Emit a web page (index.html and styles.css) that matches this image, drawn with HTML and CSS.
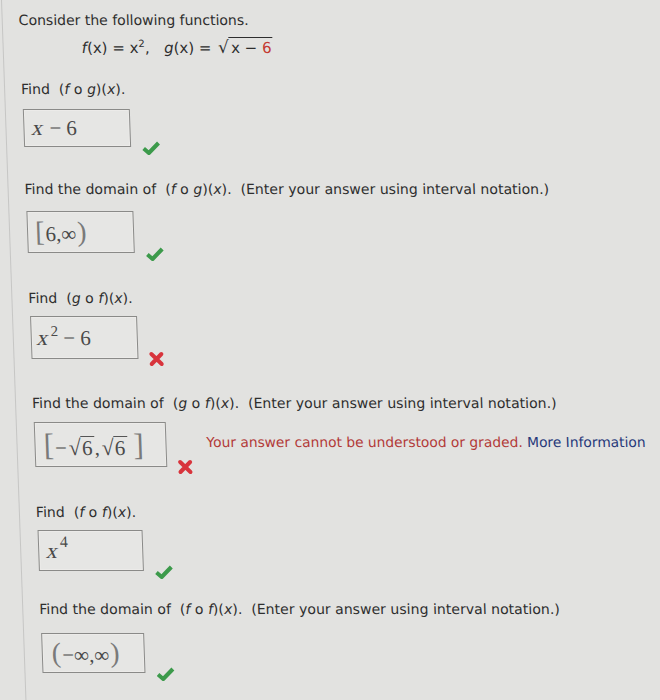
FILE: index.html
```html
<!DOCTYPE html>
<html>
<head>
<meta charset="utf-8">
<link rel="stylesheet" href="styles.css">
</head>
<body>
<div class="page">
  <p class="title">Consider the following functions.</p>
  <p class="given"><i>f</i>(x) = x<sup>2</sup>,&nbsp;&nbsp; <i>g</i>(x) = <span class="srad">√</span><span class="sov">x − <span class="red">6</span></span></p>

  <p class="prompt p1">Find&nbsp; (<i>f</i> o <i>g</i>)(<i>x</i>).</p>
  <div class="row r1">
    <div class="box b1"><span class="m"><i class="v">x</i><span class="op">−</span>6</span></div>
    <svg class="mark" viewBox="0 0 20 16" width="20" height="16"><polyline points="2.5,8.5 7.5,13 17.5,3" fill="none" stroke="#3c9a4b" stroke-width="4" stroke-linejoin="round"/></svg>
  </div>

  <p class="prompt p2">Find the domain of&nbsp; (<i>f</i> o <i>g</i>)(<i>x</i>).&nbsp; (Enter your answer using interval notation.)</p>
  <div class="row r2">
    <div class="box b2"><span class="m"><span class="br">[</span>6,∞<span class="br">)</span></span></div>
    <svg class="mark" viewBox="0 0 20 16" width="20" height="16"><polyline points="2.5,8.5 7.5,13 17.5,3" fill="none" stroke="#3c9a4b" stroke-width="4" stroke-linejoin="round"/></svg>
  </div>

  <p class="prompt p3">Find&nbsp; (<i>g</i> o <i>f</i>)(<i>x</i>).</p>
  <div class="row r3">
    <div class="box b3"><span class="m"><i class="v">x</i><sup class="sp">2</sup><span class="op">−</span>6</span></div>
    <svg class="mark xm" viewBox="0 0 16 16" width="16" height="16"><path d="M3 3 L13 13 M13 3 L3 13" stroke="#d8343c" stroke-width="4" stroke-linecap="round"/></svg>
  </div>

  <p class="prompt p4">Find the domain of&nbsp; (<i>g</i> o <i>f</i>)(<i>x</i>).&nbsp; (Enter your answer using interval notation.)</p>
  <div class="row r4">
    <div class="box b4"><span class="m"><span class="br big">[</span>−<span class="rad">√</span><span class="ov">6</span>,<span class="rad">√</span><span class="ov">6</span>&nbsp;<span class="br big">]</span></span></div>
    <svg class="mark xm" viewBox="0 0 16 16" width="16" height="16"><path d="M3 3 L13 13 M13 3 L3 13" stroke="#d8343c" stroke-width="4" stroke-linecap="round"/></svg>
    <p class="err">Your answer cannot be understood or graded. <span class="more">More Information</span></p>
  </div>

  <p class="prompt p5">Find&nbsp; (<i>f</i> o <i>f</i>)(<i>x</i>).</p>
  <div class="row r5">
    <div class="box b5"><span class="m"><i class="v">x</i><sup class="sp hi">4</sup></span></div>
    <svg class="mark" viewBox="0 0 20 16" width="20" height="16"><polyline points="2.5,8.5 7.5,13 17.5,3" fill="none" stroke="#3c9a4b" stroke-width="4" stroke-linejoin="round"/></svg>
  </div>

  <p class="prompt p6">Find the domain of&nbsp; (<i>f</i> o <i>f</i>)(<i>x</i>).&nbsp; (Enter your answer using interval notation.)</p>
  <div class="row r6">
    <div class="box b6"><span class="m"><span class="br">(</span>−∞,∞<span class="br">)</span></span></div>
    <svg class="mark" viewBox="0 0 20 16" width="20" height="16"><polyline points="2.5,8.5 7.5,13 17.5,3" fill="none" stroke="#3c9a4b" stroke-width="4" stroke-linejoin="round"/></svg>
  </div>
</div>
</body>
</html>
```

FILE: styles.css
```css
html, body {
  margin: 0;
  padding: 0;
  background: #e2e2e0;
}
body {
  font-family: "DejaVu Sans", Verdana, sans-serif;
  font-size: 14px;
  color: #2e2e2e;
  overflow: hidden;
  height: 700px;
}
.page {
  box-sizing: border-box;
  height: 700px;
  overflow: hidden;
  margin-left: 1px;
  border-left: 1px solid #c6c6c4;
  padding: 11px 0 0 16px;
  transform: skewX(2deg);
  transform-origin: 0 0;
}
p {
  margin: 0;
  line-height: 18px;
}
i {
  font-style: italic;
}
.prompt {
  letter-spacing: 0.04px;
}
.given {
  margin-top: 9px;
  padding-left: 62px;
  font-size: 15px;
}
.given sup {
  font-size: 10px;
  line-height: 0;
  vertical-align: 6px;
}
.srad {
  font-size: 17px;
  margin-left: 2px;
}
.sov {
  border-top: 1px solid #2e2e2e;
  padding: 1px 1px 0 2px;
}
.red {
  color: #c43a32;
}
.prompt.p1 { margin-top: 23px; }
.prompt.p2 { margin-top: 33px; }
.prompt.p3 { margin-top: 36px; }
.prompt.p4 { margin-top: 35px; }
.prompt.p5 { margin-top: 36px; }
.prompt.p6 { margin-top: 29px; }

.row {
  display: flex;
  align-items: flex-end;
  gap: 10px;
  margin-left: 1px;
}
.r1 { margin-top: 11px; }
.r2 { margin-top: 13px; }
.r3 { margin-top: 9px; }
.r4 { margin-top: 10px; }
.r5 { margin-top: 9px; }
.r6 { margin-top: 15px; }

.box {
  box-sizing: border-box;
  width: 107px;
  border: 1px solid #8a8a88;
  box-shadow: inset 0 0 0 1px #ecebe9;
  background: #e6e6e4;
  display: flex;
  align-items: center;
  padding-left: 8px;
  font-family: "Liberation Serif", "Times New Roman", serif;
  font-size: 21px;
  color: #4a4a4a;
}
.b1 { height: 38px; }
.b2 { height: 42px; padding-left: 6px; }
.b3 { height: 43px; padding-left: 6px; }
.b4 { height: 45px; width: 132px; padding-left: 7px; }
.b5 { height: 41px; width: 105px; }
.b6 { height: 40px; width: 103px; }

.m {
  white-space: nowrap;
  display: inline-flex;
  align-items: baseline;
}
.v {
  display: inline-block;
  font-family: "Liberation Serif", serif;
  font-style: normal;
  font-size: 22px;
  transform: skewX(-14deg);
  margin-right: 1px;
}
.op {
  margin: 0 5px;
}
.br {
  font-size: 28px;
  font-weight: normal;
  color: #7a7a7a;
  margin: 0 1px;
}
.br.big {
  font-size: 31px;
}
.sp {
  font-size: 15px;
  line-height: 0;
  position: relative;
  top: -9px;
  margin-left: 1px;
}
.sp.hi {
  top: -11px;
  font-size: 16px;
}
.rad {
  font-size: 22px;
  margin-left: 2px;
}
.ov {
  border-top: 1px solid #555;
  padding: 0 2px 0 1px;
  line-height: 22px;
}
.mark {
  flex: none;
  margin-bottom: -9px;
}
.mark.xm {
  margin-bottom: -8px;
}
.err {
  align-self: flex-start;
  margin-top: 11px;
  margin-left: 4px;
  font-size: 13.8px;
  color: #b23a38;
  white-space: nowrap;
}
.more {
  color: #27397a;
}
```
